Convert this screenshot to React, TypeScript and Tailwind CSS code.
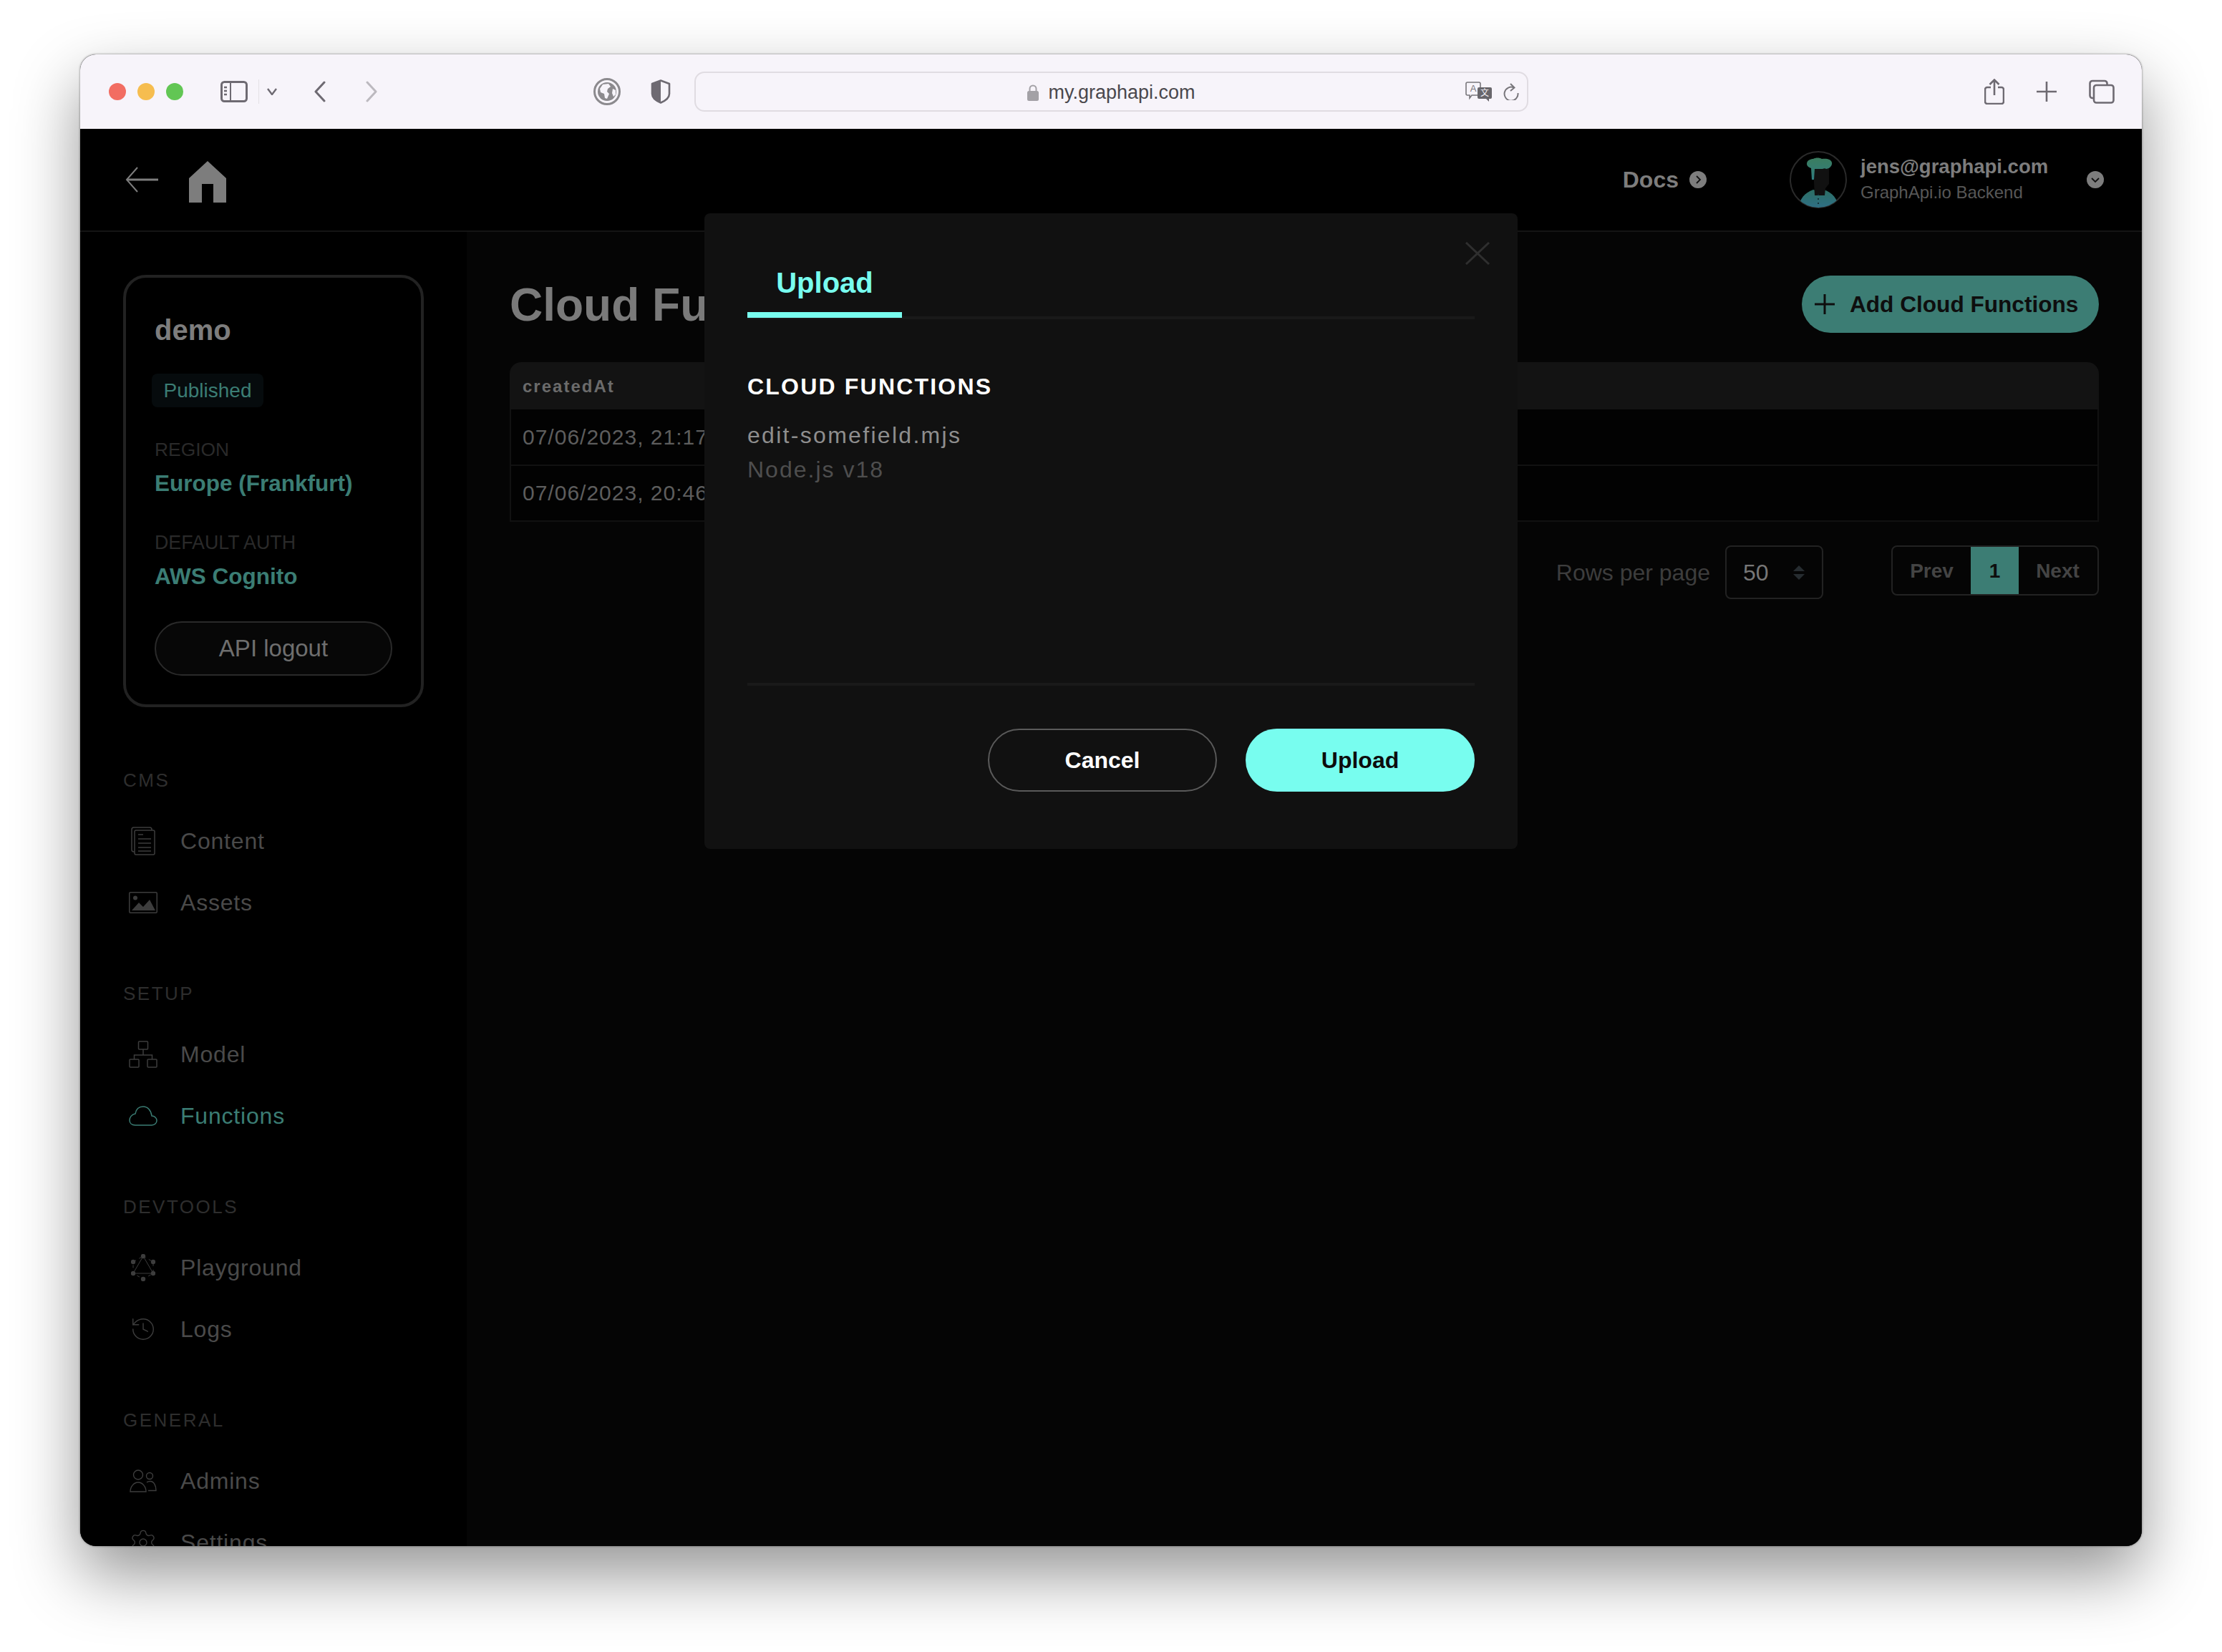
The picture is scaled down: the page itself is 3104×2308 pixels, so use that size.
import { History, Settings } from "lucide-react";

const SANS = "font-['Liberation_Sans',Arial,sans-serif]";

function SidebarToggleIcon() {
  return (
    <svg width="38" height="30" viewBox="0 0 38 30" fill="none" stroke="#6e6a72">
      <rect x="1.5" y="1.5" width="35" height="27" rx="4" strokeWidth="3" />
      <path d="M14 2v26" strokeWidth="2" />
      <path d="M5 9h4M5 14h4M5 19h4" strokeWidth="2.4" />
    </svg>
  );
}

function Chevron({ dir, color }: { dir: "left" | "right" | "down"; color: string }) {
  if (dir === "down") {
    return (
      <svg width="14" height="10" viewBox="0 0 14 10" fill="none" stroke={color} strokeWidth="2.4">
        <path d="M1 1l6 8 6-8" />
      </svg>
    );
  }
  return (
    <svg width="16" height="30" viewBox="0 0 16 30" fill="none" stroke={color} strokeWidth="3" strokeLinecap="round" strokeLinejoin="round">
      <path d={dir === "left" ? "M14 2L2 15l12 13" : "M2 2l12 13L2 28"} />
    </svg>
  );
}

function GlobeIcon() {
  return (
    <svg width="38" height="38" viewBox="0 0 38 38" fill="none">
      <circle cx="19" cy="19" r="17.5" stroke="#8c8a8e" strokeWidth="3" />
      <circle cx="19" cy="19" r="13" fill="#8c8a8e" />
      <path d="M13 9l8-1 3 4-4 3-1 4 3 3-3 7-3-1-1-6-5-2-1-5z M27 15l4 2 0 6-3 3-2-5z" fill="#f7f4fa" />
    </svg>
  );
}

function ShieldIcon() {
  return (
    <svg width="28" height="34" viewBox="0 0 28 34" fill="none">
      <path d="M14 1.5L2 6v14c0 6 6 10 12 12.5C20 30 26 26 26 20V6z" stroke="#6e6a72" strokeWidth="2.6" strokeLinejoin="round" />
      <path d="M14 1.5L2 6v14c0 6 6 10 12 12.5z" fill="#6e6a72" />
    </svg>
  );
}

function LockIcon() {
  return (
    <svg width="16" height="23" viewBox="0 0 16 23" fill="none">
      <path d="M3.5 10V6a4.5 4.5 0 019 0v4" stroke="#a3a1a6" strokeWidth="2" />
      <rect x="0" y="9" width="16" height="14" rx="2.5" fill="#a3a1a6" />
    </svg>
  );
}

function TranslateIcon() {
  return (
    <svg width="38" height="28" viewBox="0 0 38 28" fill="none">
      <path d="M3 1h16a2 2 0 012 2v14a2 2 0 01-2 2H9l-3 4v-4H3a2 2 0 01-2-2V3a2 2 0 012-2z" stroke="#78767b" strokeWidth="1.6" />
      <text x="11" y="14" textAnchor="middle" fontSize="13" fill="#78767b" fontFamily="Liberation Sans">A</text>
      <path d="M19 8h16a2 2 0 012 2v12a2 2 0 01-2 2h-2v4l-4-4H19a2 2 0 01-2-2V10a2 2 0 012-2z" fill="#68666b" />
      <text x="27" y="20" textAnchor="middle" fontSize="12" fill="#f7f4fa" fontFamily="Noto Sans CJK SC">文</text>
    </svg>
  );
}

function ReloadIcon() {
  return (
    <svg width="22" height="24" viewBox="0 0 22 24" fill="none" stroke="#78767b" strokeWidth="2">
      <path d="M15 6.5A9.5 9.5 0 1020.5 14" />
      <path d="M10 1l5.5 5.5L10 11" />
    </svg>
  );
}

function ShareIcon() {
  return (
    <svg width="28" height="36" viewBox="0 0 28 36" fill="none" stroke="#6e6a72" strokeWidth="2.6">
      <path d="M9 12H4a3 3 0 00-3 3v17a3 3 0 003 3h20a3 3 0 003-3V15a3 3 0 00-3-3h-5" />
      <path d="M14 23V2M7.5 8L14 1.5 20.5 8" />
    </svg>
  );
}

function PlusIcon({ size, color, width }: { size: number; color: string; width: number }) {
  return (
    <svg width={size} height={size} viewBox="0 0 28 28" fill="none" stroke={color} strokeWidth={width}>
      <path d="M14 0v28M0 14h28" />
    </svg>
  );
}

function TabsIcon() {
  return (
    <svg width="36" height="34" viewBox="0 0 36 34" fill="none" stroke="#6e6a72" strokeWidth="2.6">
      <path d="M6 26H5a3.5 3.5 0 01-3.5-3.5v-17A3.5 3.5 0 015 2h17a3.5 3.5 0 013.5 3.5V7" />
      <rect x="7" y="8" width="27.5" height="24.5" rx="3.5" />
    </svg>
  );
}

function BackArrow() {
  return (
    <svg width="46" height="36" viewBox="0 0 46 36" fill="none" stroke="#7d7d7d">
      <path d="M2 18h44" strokeWidth="3.2" />
      <path d="M17 1L2 18l15 17" strokeWidth="2" />
    </svg>
  );
}

function HomeIcon() {
  return (
    <svg width="52" height="58" viewBox="0 0 52 58" className="ml-[43px] mt-[6px]">
      <path d="M26 0l26 24v34H34V32H18v26H0V24z" fill="#7d7d7d" />
    </svg>
  );
}

function Avatar() {
  return (
    <svg width="80" height="80" viewBox="0 0 80 80" fill="none">
      <defs>
        <linearGradient id="hair" x1="0" y1="0" x2="0" y2="1">
          <stop offset="0" stopColor="#3b7d5f" />
          <stop offset="1" stopColor="#2f7d80" />
        </linearGradient>
        <linearGradient id="body" x1="0" y1="0" x2="0" y2="1">
          <stop offset="0" stopColor="#2c6f64" />
          <stop offset="1" stopColor="#2f6f86" />
        </linearGradient>
        <clipPath id="ring">
          <circle cx="40" cy="40" r="39" />
        </clipPath>
      </defs>
      <circle cx="40" cy="40" r="39" fill="#000" stroke="#2a2a2a" strokeWidth="2" />
      <g clipPath="url(#ring)">
        <path d="M13 80c0-12 8-22 20-26l7 2 8-2c12 4 20 14 20 26z" fill="url(#body)" />
        <path d="M33 24h22v22l-5 6-1 10H35z" fill="#111" />
        <path d="M24 18c0-5 5-7 9-7 3-2 9-2 12 0 6-1 13 0 14 5 1 5-4 9-8 9-1-1-3-1-5 0H35l-1 15h-3l-1-16c-3-1-6-3-6-6z" fill="url(#hair)" />
      </g>
      <path d="M40 60v16" stroke="#10242a" strokeWidth="1.6" strokeDasharray="2 4" />
    </svg>
  );
}

function DotIcon({ dir }: { dir: "right" | "down" }) {
  return (
    <span className="flex h-[24px] w-[24px] items-center justify-center rounded-full bg-[#7d7d7d]">
      <svg width="14" height="14" viewBox="0 0 14 14" fill="none" stroke="#111" strokeWidth="1.8">
        <path d={dir === "right" ? "M5 2l5 5-5 5" : "M2 5l5 5 5-5"} />
      </svg>
    </span>
  );
}

function ContentIcon() {
  return (
    <svg width="34" height="40" viewBox="0 0 34 40" fill="none" stroke="#3d3d3d" strokeWidth="1.5">
      <rect x="1" y="1" width="28" height="34" rx="3" />
      <rect x="5" y="5" width="28" height="34" rx="2" fill="#000" />
      <path d="M10 11h7M10 17h18M10 23h18M10 29h18M10 34h18" />
    </svg>
  );
}

function AssetsIcon() {
  return (
    <svg width="40" height="30" viewBox="0 0 40 30" fill="none">
      <rect x="0.75" y="0.75" width="38.5" height="28.5" rx="1.5" stroke="#3d3d3d" strokeWidth="1.5" />
      <circle cx="9" cy="8.5" r="3" fill="#3d3d3d" />
      <path d="M4 26l10-11 6 6 9-10 8 15z" fill="#3d3d3d" />
    </svg>
  );
}

function ModelIcon() {
  return (
    <svg width="40" height="38" viewBox="0 0 40 38" fill="none" stroke="#3d3d3d" strokeWidth="1.5">
      <rect x="13.5" y="1" width="13" height="11" rx="1" />
      <rect x="1" y="26" width="13" height="11" rx="1" />
      <rect x="26" y="26" width="13" height="11" rx="1" />
      <path d="M20 12v8M7.5 26v-6h25v6" />
    </svg>
  );
}

function CloudIcon() {
  return (
    <svg width="40" height="28" viewBox="0 0 40 28" fill="none" stroke="#3b7d74" strokeWidth="1.5">
      <path d="M9 27h23c4 0 7-3 7-6.5S36 14 32 14C31 6 26 1 20 1S10 5 9 11c-5 1-8 5-8 9s3 7 8 7z" />
    </svg>
  );
}

function GraphIcon() {
  const nodes = [
    [17, 3],
    [31, 11],
    [31, 27],
    [17, 35],
    [3, 27],
    [3, 11],
  ];
  return (
    <svg width="34" height="38" viewBox="0 0 34 38" fill="none" stroke="#3d3d3d" strokeWidth="1">
      <path d="M17 3l14 8v16l-14 8-14-8V11z" strokeDasharray="4 5" />
      <path d="M17 3l14 24H3z" />
      {nodes.map(([x, y]) => (
        <circle key={`${x}-${y}`} cx={x} cy={y} r="3.2" fill="#3d3d3d" stroke="none" />
      ))}
    </svg>
  );
}

function AdminsIcon() {
  return (
    <svg width="38" height="32" viewBox="0 0 38 32" fill="none" stroke="#3d3d3d" strokeWidth="1.4">
      <circle cx="12" cy="7.5" r="6.5" />
      <circle cx="28" cy="9" r="4.5" />
      <path d="M1 31c0-7 5-13 11-13s11 6 11 13z" />
      <path d="M24 18c1-1 3-1.500 5-1.500 5 0 8 6 8 13h-11" />
    </svg>
  );
}

function NavLabel({ children }: { children: string }) {
  return <div className="flex h-[40px] items-center text-[26px] tracking-[2.5px] text-[#2e2e2e]">{children}</div>;
}

function NavItem({ icon, label, active }: { icon: React.ReactNode; label: string; active?: boolean }) {
  return (
    <div className={`flex h-[86px] items-center gap-[32px] text-[32px] tracking-[0.8px] ${active ? "text-[#3b7d74]" : "text-[#4a4a4a]"}`}>
      <span className="ml-[8px] flex w-[40px] justify-center">{icon}</span>
      {label}
    </div>
  );
}

function Sidebar() {
  return (
    <aside className="w-[540px] shrink-0 bg-black pl-[60px] pt-[60px]">
      <div className="flex h-[604px] w-[420px] flex-col rounded-[32px] border-[4px] border-[#222] pl-[40px] pr-[40px] pt-[46px]">
        <div className="text-[40px] leading-[54px] font-bold text-[#7d7d7d]">demo</div>
        <div className="mt-[34px] -ml-[4px] flex h-[47px] w-[156px] items-center justify-center rounded-[8px] bg-[#060b0d] text-[28px] text-[#3b7d74]">Published</div>
        <div className="mt-[44px] text-[26.4px] leading-[30px] text-[#2a2a2a]">REGION</div>
        <div className="mt-[16px] text-[31.500px] leading-[32px] font-bold text-[#3b7d74]">Europe (Frankfurt)</div>
        <div className="pt-[52px] text-[26.800px] leading-[30px] text-[#2a2a2a]">DEFAULT AUTH</div>
        <div className="mt-[16px] text-[31.500px] leading-[32px] font-bold text-[#3b7d74]">AWS Cognito</div>
        <button className="mt-[47px] h-[76px] w-[332px] rounded-full border-2 border-[#2a2a2a] bg-[#070707] text-[33px] text-[#6e6e6e]">API logout</button>
      </div>
      <nav className="mt-[82px] flex flex-col gap-[64px]">
        <section>
          <NavLabel>CMS</NavLabel>
          <div className="mt-[22px]">
            <NavItem icon={<ContentIcon />} label="Content" />
            <NavItem icon={<AssetsIcon />} label="Assets" />
          </div>
        </section>
        <section>
          <NavLabel>SETUP</NavLabel>
          <div className="mt-[22px]">
            <NavItem icon={<ModelIcon />} label="Model" />
            <NavItem icon={<CloudIcon />} label="Functions" active />
          </div>
        </section>
        <section>
          <NavLabel>DEVTOOLS</NavLabel>
          <div className="mt-[22px]">
            <NavItem icon={<GraphIcon />} label="Playground" />
            <NavItem icon={<History size={38} strokeWidth={0.9} color="#3d3d3d" />} label="Logs" />
          </div>
        </section>
        <section>
          <NavLabel>GENERAL</NavLabel>
          <div className="mt-[22px]">
            <NavItem icon={<AdminsIcon />} label="Admins" />
            <NavItem icon={<Settings size={44} strokeWidth={0.8} color="#3d3d3d" />} label="Settings" />
          </div>
        </section>
      </nav>
    </aside>
  );
}

const ROWS = ["07/06/2023, 21:17:42", "07/06/2023, 20:46:11"];

function Main() {
  return (
    <main className="min-w-0 flex-1 bg-[#050505] px-[60px] pt-[61px]">
      <div className="flex h-[80px] items-center justify-between">
        <h1 className="pt-[2px] text-[64px] font-bold text-[#7a7a7a]">Cloud Functions</h1>
        <button className="flex h-[80px] w-[415px] items-center gap-[21px] rounded-full bg-[#3c7d74] pl-[18px] text-[31.600px] font-bold text-[#0e0e0e]">
          <PlusIcon size={28} color="#0e0e0e" width={3} />
          <span className="pt-[2px]">Add Cloud Functions</span>
        </button>
      </div>
      <div className="mt-[41px]">
        <div className="flex h-[66px] items-center rounded-t-[16px] bg-[#131313] pl-[18px] pt-[2px] text-[24px] font-bold tracking-[2px] text-[#6b6b6b]">createdAt</div>
        {ROWS.map((row) => (
          <div key={row} className="flex h-[78.500px] items-center border-x-2 border-b-2 border-[#111] bg-[#020202] pl-[16px] text-[30px] tracking-[1px] text-[#5d5d5d]">
            {row}
          </div>
        ))}
      </div>
      <div className="mt-[33px] flex items-start justify-end">
        <span className="mt-[14px] text-[32px] text-[#3d3d3d]">Rows per page</span>
        <div className="ml-[21px] flex h-[75px] w-[137px] items-center justify-between rounded-[8px] border-2 border-[#222] pl-[23px] pr-[23px] text-[32px] text-[#777]">
          50
          <svg width="18" height="20" viewBox="0 0 18 20" fill="#262c30">
            <path d="M9 0l8 8H1zM1 12h16l-8 8z" />
          </svg>
        </div>
        <div className="ml-[95px] flex h-[70px] w-[290px] overflow-hidden rounded-[8px] border-2 border-[#222] text-[28px] font-bold text-[#444]">
          <span className="flex flex-1 items-center justify-center pt-[2px]">Prev</span>
          <span className="flex w-[67px] items-center justify-center bg-[#3c7d74] pt-[2px] text-[#0e0e0e]">1</span>
          <span className="flex flex-1 items-center justify-center pr-[1px] pt-[2px]">Next</span>
        </div>
      </div>
    </main>
  );
}

function UploadModal() {
  return (
    <div className="absolute left-[872px] top-[222px] h-[888px] w-[1136px] rounded-[8px] bg-[#111] pl-[60px] pr-[60px] pt-[60px]">
      <svg className="absolute right-[39px] top-[40px]" width="34" height="32" viewBox="0 0 34 32" fill="none" stroke="#2f2f2f" strokeWidth="3">
        <path d="M1 1l32 30M33 1L1 31" />
      </svg>
      <div className="flex border-b-4 border-[#1a1a1a]">
        <div className="-mb-[2px] flex h-[86px] w-[216px] justify-center border-b-8 border-[#78fdef] pt-[11px] text-[40px] font-bold leading-[52px] text-[#78fdef]">Upload</div>
      </div>
      <div className="mt-[74px] text-[32px] leading-[40px] font-bold tracking-[2.2px] text-white">CLOUD FUNCTIONS</div>
      <div className="mt-[24px] text-[32px] leading-[48px] tracking-[2.3px] text-[#8e8e8e]">edit-somefield.mjs</div>
      <div className="text-[32px] leading-[48px] tracking-[2px] text-[#4e4e4e]">Node.js v18</div>
      <div className="mt-[274px] h-[4px] bg-[#1a1a1a]" />
      <div className="mt-[60px] flex justify-end gap-[40px] text-[32px] font-bold">
        <button className="h-[88px] w-[320px] rounded-full border-2 border-[#5a5a5a] text-white">Cancel</button>
        <button className="h-[88px] w-[320px] rounded-full bg-[#78fdef] text-[#0c0c0c]">Upload</button>
      </div>
    </div>
  );
}

export default function App() {
  return (
    <div className={`h-[2308px] w-[3104px] overflow-hidden bg-white pl-[112px] pt-[76px] ${SANS}`}>
      <div className="relative flex h-[2084px] w-[2880px] flex-col overflow-hidden rounded-[22px] bg-black shadow-[0_40px_90px_rgba(0,0,0,0.42),0_0_3px_rgba(0,0,0,0.5)]">
        <div className="flex h-[104px] shrink-0 items-center bg-[#f7f4fa] pl-[40px] pr-[38px]">
          <span className="h-[24px] w-[24px] rounded-full bg-[#f26d62]" />
          <span className="ml-[16px] h-[24px] w-[24px] rounded-full bg-[#f6bd4f]" />
          <span className="ml-[16px] h-[24px] w-[24px] rounded-full bg-[#62c654]" />
          <span className="ml-[52px]"><SidebarToggleIcon /></span>
          <span className="ml-[15px] h-[34px] w-px bg-[#e4e1e6]" />
          <span className="ml-[11px]"><Chevron dir="down" color="#6e6a72" /></span>
          <span className="ml-[52px]"><Chevron dir="left" color="#6e6a72" /></span>
          <span className="ml-[56px]"><Chevron dir="right" color="#bcb9bf" /></span>
          <span className="ml-[302px]"><GlobeIcon /></span>
          <span className="ml-[42px]"><ShieldIcon /></span>
          <div className="ml-[33px] grid h-[56px] w-[1165px] grid-cols-[1fr_auto_1fr] items-center rounded-[14px] border-2 border-[#e0dce2] text-[27px] text-[#4a484d]">
            <span />
            <span className="flex items-center gap-[13px] pt-[2px]">
              <LockIcon />
              my.graphapi.com
            </span>
            <span className="flex items-center justify-end gap-[15px] pr-[11px]">
              <TranslateIcon />
              <ReloadIcon />
            </span>
          </div>
          <span className="ml-auto"><ShareIcon /></span>
          <span className="ml-[45px]"><PlusIcon size={28} color="#6e6a72" width={2.6} /></span>
          <span className="ml-[45px]"><TabsIcon /></span>
        </div>
        <header className="flex h-[144px] shrink-0 items-center border-b-2 border-[#141414] bg-black pl-[63px] pr-[53px]">
          <BackArrow />
          <HomeIcon />
          <span className="ml-auto text-[32px] font-bold text-[#7d7d7d]">Docs</span>
          <span className="ml-[15px]"><DotIcon dir="right" /></span>
          <span className="ml-[116px]"><Avatar /></span>
          <div className="ml-[19px] flex w-[262px] flex-col">
            <span className="text-[27.500px] leading-[34px] font-bold text-[#7d7d7d]">jens@graphapi.com</span>
            <span className="pt-[2px] text-[24px] leading-[34px] text-[#575757]">GraphApi.io Backend</span>
          </div>
          <span className="ml-[54px]"><DotIcon dir="down" /></span>
        </header>
        <div className="flex min-h-0 flex-1">
          <Sidebar />
          <Main />
        </div>
        <UploadModal />
      </div>
    </div>
  );
}
